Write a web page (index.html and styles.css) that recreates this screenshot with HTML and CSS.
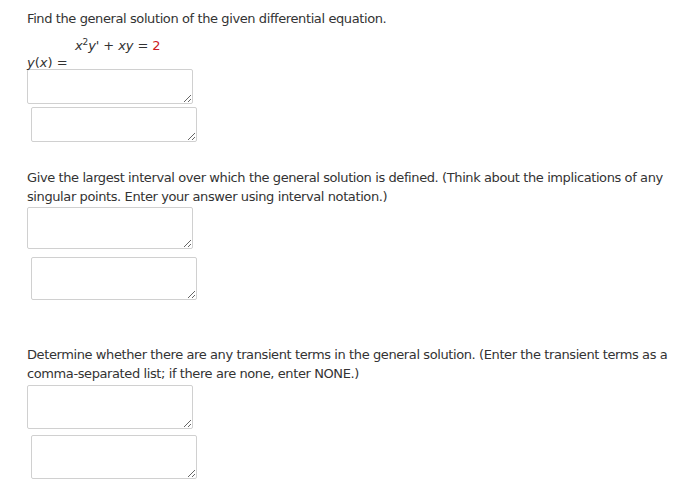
FILE: index.html
```html
<!DOCTYPE html>
<html>
<head>
<meta charset="utf-8">
<link rel="stylesheet" href="styles.css">
</head>
<body>
<div class="page">
  <p class="q first">Find the general solution of the given differential equation.</p>
  <div class="eq"><i>x</i><sup>2</sup><i>y</i>' + <i>xy</i> = <span class="red">2</span></div>
  <div class="label"><i>y</i>(<i>x</i>) =</div>
  <textarea class="ans a1"></textarea>
  <textarea class="ans sub a2"></textarea>

  <p class="q p2">Give the largest interval over which the general solution is defined. (Think about the implications of any singular points. Enter your answer using interval notation.)</p>
  <textarea class="ans a3"></textarea>
  <textarea class="ans sub a4"></textarea>

  <p class="q p3">Determine whether there are any transient terms in the general solution. (Enter the transient terms as a comma-separated list; if there are none, enter NONE.)</p>
  <textarea class="ans a5"></textarea>
  <textarea class="ans sub a6"></textarea>
</div>
</body>
</html>
```

FILE: styles.css
```css
html, body {
  margin: 0;
  padding: 0;
  background: #fff;
}
.page {
  padding: 9px 0 0 27px;
  width: 652px;
  font-family: "DejaVu Sans", Verdana, sans-serif;
  font-size: 13px;
  letter-spacing: -0.4px;
  color: #333;
}
.q {
  margin: 0;
  line-height: 19px;
}
.first {
  line-height: 19px;
}
.eq {
  margin: 10px 0 0 48px;
  line-height: 16px;
  font-size: 13px;
  letter-spacing: -0.1px;
}
.eq sup {
  font-size: 9px;
  line-height: 0;
  vertical-align: 5px;
}
.red {
  color: #cc1a22;
}
.label {
  margin-top: 2px;
  line-height: 14px;
  letter-spacing: 0;
}
.ans {
  display: block;
  box-sizing: border-box;
  width: 166px;
  margin: 0;
  padding: 0;
  border: 1px solid #d0d0d0;
  border-radius: 2px;
  background: #fff;
  resize: both;
}
.sub {
  margin-left: 4px;
}
.a1 { margin-top: -1px; height: 35px; }
.a2 { margin-top: 3px; height: 35px; }
.p2 { margin-top: 26px; }
.a3 { margin-top: 1px; height: 42px; }
.a4 { margin-top: 8px; height: 43px; }
.p3 { margin-top: 45px; }
.a5 { margin-top: 2px; height: 44px; }
.a6 { margin-top: 6px; height: 44px; }
```
